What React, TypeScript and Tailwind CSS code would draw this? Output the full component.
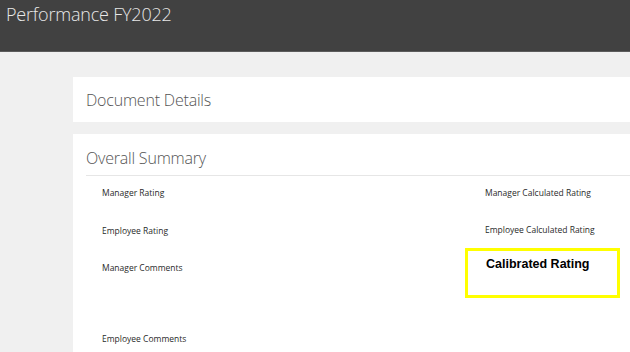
export default function App() {
  const sans = { fontFamily: '"Open Sans", "Noto Sans", sans-serif' };

  return (
    <div className="w-[630px] h-[352px] overflow-hidden bg-[#f0f0f0] flex flex-col" style={sans}>
      {/* top bar */}
      <header className="h-[52px] shrink-0 bg-[#414141] border-b border-[#5c5c5c] px-[6px] pt-[2px]">
        <h1 className="text-[18px] leading-[24px] font-light text-[#e8e8e8] tracking-[-0.2px]">Performance FY2022</h1>
      </header>

      <main className="flex-1 flex flex-col pl-[73px] pt-[25px]">
        {/* Document Details */}
        <section className="h-[45px] shrink-0 bg-white flex items-center px-[13px]">
          <h2 className="text-[16px] font-light text-[#555] tracking-[-0.2px]">Document Details</h2>
        </section>

        {/* Overall Summary */}
        <section className="mt-[12px] flex-1 bg-white flex flex-col">
          <div className="ml-[13px] pt-[14px] pb-[7px] border-b border-[#e6e6e6]">
            <h2 className="text-[16px] leading-[20px] font-light text-[#555] tracking-[-0.2px]">Overall Summary</h2>
          </div>

          <div className="flex ml-[13px] text-[8.5px] leading-[14px] text-[#2a2a2a]">
            <div className="w-[379px] shrink-0 flex flex-col pl-[16px] pt-[10px]">
              <span>Manager Rating</span>
              <span className="mt-[24px]">Employee Rating</span>
              <span className="mt-[23px]">Manager Comments</span>
              <span className="mt-[57px]">Employee Comments</span>
            </div>

            <div className="flex-1 flex flex-col pt-[10px]">
              <span className="pl-[20px]">Manager Calculated Rating</span>
              <span className="pl-[20px] mt-[23px]">Employee Calculated Rating</span>
              <div className="mt-[11px] w-[155px] h-[50px] border-[3px] border-[#ffff00] pl-[18px] pt-[5px]">
                <span
                  className="text-[12.5px] leading-[16px] font-bold text-black"
                  style={{ fontFamily: '"Liberation Sans", Arial, sans-serif' }}
                >
                  Calibrated Rating
                </span>
              </div>
            </div>
          </div>
        </section>
      </main>
    </div>
  );
}
